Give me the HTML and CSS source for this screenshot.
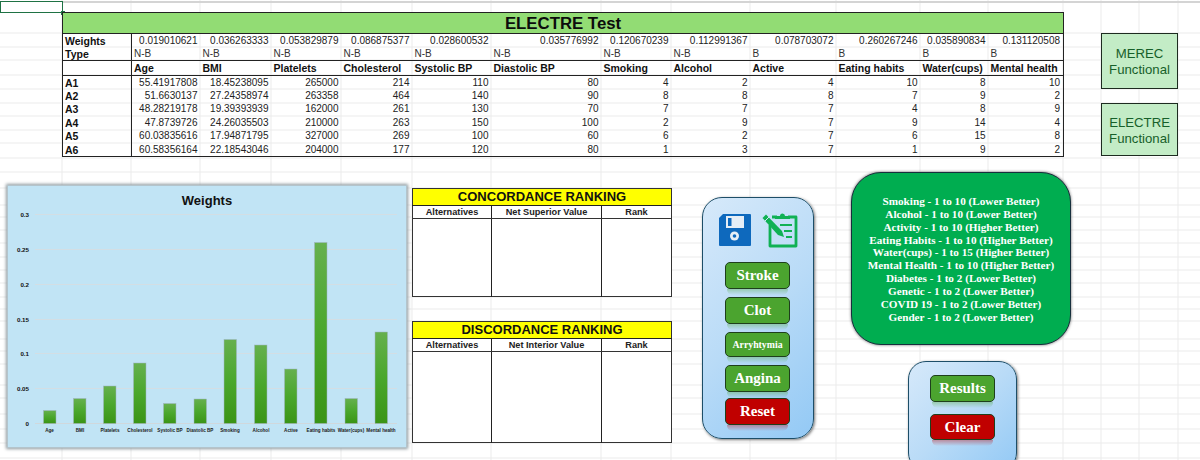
FILE: index.html
```html
<!DOCTYPE html>
<html lang="en">
<head>
<meta charset="utf-8">
<title>ELECTRE Test</title>
<link rel="stylesheet" href="styles.css">
</head>
<body>
<div class="sheet">
  <svg class="gridlines" width="1200" height="460" aria-hidden="true">
    <path class="grid-v" d="M62 0V460M131 0V460M200 0V460M271 0V460M341 0V460M412 0V460M491 0V460M601 0V460M671 0V460M750 0V460M836 0V460M920 0V460M988 0V460M1063 0V460M1101 0V460M1139 0V460M1178 0V460"/>
    <path class="grid-h" d="M0 33H1200M0 47H1200M0 60H1200M0 75H1200M0 89H1200M0 103H1200M0 116H1200M0 130H1200M0 143H1200M0 158H1200M0 172H1200M0 188H1200M0 205H1200M0 217H1200M0 230H1200M0 243H1200M0 257H1200M0 270H1200M0 283H1200M0 297H1200M0 309H1200M0 321H1200M0 339H1200M0 351H1200M0 364H1200M0 385H1200M0 398H1200M0 414H1200M0 429H1200M0 443H1200M0 458H1200"/>
    <path class="grid-top" d="M62 2H1200"/>
  </svg>
  <div class="selected-cell"></div>

  <div class="top-row">
    <table class="data-table">
      <colgroup>
        <col class="c1"><col class="c2"><col class="c3"><col class="c4"><col class="c5"><col class="c6"><col class="c7"><col class="c8"><col class="c9"><col class="c10"><col class="c11"><col class="c12"><col class="c13">
      </colgroup>
      <thead>
        <tr class="title-row"><th colspan="13">ELECTRE Test</th></tr>
      </thead>
      <tbody class="meta">
        <tr>
          <th class="side">Weights</th><td>0.019010621</td><td>0.036263333</td><td>0.053829879</td><td>0.086875377</td><td>0.028600532</td><td>0.035776992</td><td>0.120670239</td><td>0.112991367</td><td>0.078703072</td><td>0.260267246</td><td>0.035890834</td><td>0.131120508</td>
        </tr>
        <tr class="type-row">
          <th class="side">Type</th><td>N-B</td><td>N-B</td><td>N-B</td><td>N-B</td><td>N-B</td><td>N-B</td><td>N-B</td><td>N-B</td><td>B</td><td>B</td><td>B</td><td>B</td>
        </tr>
      </tbody>
      <tbody class="heads">
        <tr>
          <th class="side"></th><th>Age</th><th>BMI</th><th>Platelets</th><th>Cholesterol</th><th>Systolic BP</th><th>Diastolic BP</th><th>Smoking</th><th>Alcohol</th><th>Active</th><th>Eating habits</th><th>Water(cups)</th><th>Mental health</th>
        </tr>
      </tbody>
      <tbody class="values">
        <tr><th class="side">A1</th><td>55.41917808</td><td>18.45238095</td><td>265000</td><td>214</td><td>110</td><td>80</td><td>4</td><td>2</td><td>4</td><td>10</td><td>8</td><td>10</td></tr>
        <tr><th class="side">A2</th><td>51.6630137</td><td>27.24358974</td><td>263358</td><td>464</td><td>140</td><td>90</td><td>8</td><td>8</td><td>8</td><td>7</td><td>9</td><td>2</td></tr>
        <tr><th class="side">A3</th><td>48.28219178</td><td>19.39393939</td><td>162000</td><td>261</td><td>130</td><td>70</td><td>7</td><td>7</td><td>7</td><td>4</td><td>8</td><td>9</td></tr>
        <tr><th class="side">A4</th><td>47.8739726</td><td>24.26035503</td><td>210000</td><td>263</td><td>150</td><td>100</td><td>2</td><td>9</td><td>7</td><td>9</td><td>14</td><td>4</td></tr>
        <tr><th class="side">A5</th><td>60.03835616</td><td>17.94871795</td><td>327000</td><td>269</td><td>100</td><td>60</td><td>6</td><td>2</td><td>7</td><td>6</td><td>15</td><td>8</td></tr>
        <tr><th class="side">A6</th><td>60.58356164</td><td>22.18543046</td><td>204000</td><td>177</td><td>120</td><td>80</td><td>1</td><td>3</td><td>7</td><td>1</td><td>9</td><td>2</td></tr>
      </tbody>
    </table>
    <div class="side-buttons">
      <div class="func-btn">MEREC<br>Functional</div>
      <div class="func-btn func-btn-short">ELECTRE<br>Functional</div>
    </div>
  </div>

  <div class="bottom-row">
    <figure class="chart">
      <svg width="398" height="261" viewBox="8 186 398 261">
        <defs>
          <linearGradient id="barfill" x1="0" y1="0" x2="0" y2="1">
            <stop offset="0" stop-color="#66b04e"/>
            <stop offset="0.5" stop-color="#4aa72c"/>
            <stop offset="1" stop-color="#3a9416"/>
          </linearGradient>
        </defs>
        <text class="chart-title" x="207" y="205">Weights</text>
        <path class="chart-grid" d="M35 214.500H397M35 249.500H397M35 284.500H397M35 319.500H397M35 353.500H397M35 388.500H397"/>
        <path class="chart-axis" d="M35 423.500H397"/>
        <g class="y-labels">
          <text x="29" y="217">0.3</text>
          <text x="29" y="252">0.25</text>
          <text x="29" y="287">0.2</text>
          <text x="29" y="322">0.15</text>
          <text x="29" y="356">0.1</text>
          <text x="29" y="391">0.05</text>
          <text x="29" y="426">0</text>
        </g>
        <g class="bars">
          <rect x="43.500" y="410.500" width="12.500" height="13"/>
          <rect x="73.500" y="398.500" width="12.500" height="25"/>
          <rect x="103.500" y="386" width="12.500" height="37.500"/>
          <rect x="133.500" y="363" width="12.500" height="60.500"/>
          <rect x="163.500" y="403.500" width="12.500" height="20"/>
          <rect x="194" y="399" width="12.500" height="24.500"/>
          <rect x="224" y="339.500" width="12.500" height="84"/>
          <rect x="254.500" y="345" width="12.500" height="78.500"/>
          <rect x="284.500" y="369" width="12.500" height="54.500"/>
          <rect x="314.500" y="242.500" width="12.500" height="181"/>
          <rect x="345" y="398.500" width="12.500" height="25"/>
          <rect x="375" y="332" width="12.500" height="91.500"/>
        </g>
        <g class="x-labels">
          <text x="49.500" y="432">Age</text>
          <text x="80" y="432">BMI</text>
          <text x="110" y="432">Platelets</text>
          <text x="140" y="432">Cholesterol</text>
          <text x="170" y="432">Systolic BP</text>
          <text x="200" y="432">Diastolic BP</text>
          <text x="230" y="432">Smoking</text>
          <text x="261" y="432">Alcohol</text>
          <text x="291" y="432">Active</text>
          <text x="321" y="432">Eating habits</text>
          <text x="351" y="432">Water(cups)</text>
          <text x="381" y="432">Mental health</text>
        </g>
      </svg>
    </figure>

    <div class="rankings">
      <table class="rank-table rank-top">
        <colgroup><col class="r1"><col class="r2"><col class="r3"></colgroup>
        <thead>
          <tr class="rank-title"><th colspan="3">CONCORDANCE RANKING</th></tr>
          <tr class="rank-head"><th>Alternatives</th><th>Net Superior Value</th><th>Rank</th></tr>
        </thead>
        <tbody><tr><td></td><td></td><td></td></tr></tbody>
      </table>
      <table class="rank-table rank-bottom">
        <colgroup><col class="r1"><col class="r2"><col class="r3"></colgroup>
        <thead>
          <tr class="rank-title"><th colspan="3">DISCORDANCE RANKING</th></tr>
          <tr class="rank-head"><th>Alternatives</th><th>Net Interior Value</th><th>Rank</th></tr>
        </thead>
        <tbody><tr><td></td><td></td><td></td></tr></tbody>
      </table>
    </div>

    <div class="panel panel-main">
      <div class="icons">
        <svg width="34" height="34" viewBox="0 0 34 34" aria-label="Save">
          <path class="floppy" d="M5 1H32a1 1 0 0 1 1 1V32a1 1 0 0 1-1 1H2a1 1 0 0 1-1-1V5Z"/>
          <rect class="floppy-label" x="8" y="3" width="18" height="12"/>
          <rect class="floppy-slot" x="10" y="5" width="3.500" height="8"/>
          <circle class="floppy-label" cx="16.500" cy="23" r="4.500"/>
          <circle class="floppy-slot" cx="16.500" cy="23" r="1.800"/>
        </svg>
        <svg width="36" height="36" viewBox="0 0 36 36" aria-label="Clipboard">
          <path class="clip-line" d="M8 13V34H34V5H26M15 5H10"/>
          <path class="clip-fill" d="M13 7V4H18A2.500 2.500 0 0 1 23 4H28V7Z"/>
          <path class="clip-thin" d="M18 13H30M22 19H30M24 25H30"/>
          <path class="clip-fill" d="M0.500 6L4 2.500L20 19L22 25L16 23Z"/>
          <path class="clip-cut" d="M3 9L7 5"/>
        </svg>
      </div>
      <div class="btn btn-green">Stroke</div>
      <div class="btn btn-green">Clot</div>
      <div class="btn btn-green btn-small">Arryhtymia</div>
      <div class="btn btn-green btn-tight">Angina</div>
      <div class="btn btn-red">Reset</div>
    </div>

    <div class="right-col">
      <div class="scale-box">
        <p>Smoking - 1 to 10 (Lower Better)</p>
        <p>Alcohol - 1 to 10 (Lower Better)</p>
        <p>Activity - 1 to 10 (Higher Better)</p>
        <p>Eating Habits - 1 to 10 (Higher Better)</p>
        <p>Water(cups) - 1 to 15 (Higher Better)</p>
        <p>Mental Health - 1 to 10 (Higher Better)</p>
        <p>Diabetes - 1 to 2 (Lower Better)</p>
        <p>Genetic - 1 to 2 (Lower Better)</p>
        <p>COVID 19 - 1 to 2 (Lower Better)</p>
        <p>Gender - 1 to 2 (Lower Better)</p>
      </div>
      <div class="panel panel-small">
        <div class="btn btn-green">Results</div>
        <div class="btn btn-red">Clear</div>
      </div>
    </div>
  </div>
</div>
</body>
</html>
```

FILE: styles.css
```css
* { box-sizing: border-box; }

html, body {
  margin: 0;
  height: 460px;
  overflow: hidden;
  background: #fff;
}

.sheet {
  position: relative;
  width: 1200px;
  height: 460px;
  overflow: hidden;
  font-family: "Liberation Sans", Arial, sans-serif;
  color: #111;
}

.gridlines {
  position: absolute;
  inset: 0;
}
.grid-v, .grid-h { stroke: #ebebeb; stroke-width: 1; fill: none; }
.grid-top { stroke: #d4d4d4; stroke-width: 2; fill: none; }

.selected-cell {
  position: absolute;
  left: 0;
  top: 1px;
  width: 63px;
  height: 12px;
  border: 1px solid #1f7244;
  background: #fff;
}
.selected-cell::after {
  content: "";
  position: absolute;
  right: -3px;
  bottom: -3px;
  width: 4px;
  height: 4px;
  background: #1f7244;
}

.top-row {
  position: relative;
  display: flex;
  align-items: flex-start;
  gap: 37px;
  padding: 12px 0 0 62px;
  height: 172px;
}

/* data table */
.data-table {
  border-collapse: collapse;
  table-layout: fixed;
  width: 1001px;
  border: 1.5px solid #222;
  font-size: 10px;
  line-height: 12px;
}
.data-table td, .data-table th {
  padding: 0 3px 0 2px;
  overflow: visible;
  white-space: nowrap;
}
.c1 { width: 69px; }
.c2 { width: 69px; }
.c3 { width: 71px; }
.c4 { width: 70px; }
.c5 { width: 71px; }
.c6 { width: 79px; }
.c7 { width: 110px; }
.c8 { width: 70px; }
.c9 { width: 79px; }
.c10 { width: 86px; }
.c11 { width: 84px; }
.c12 { width: 68px; }
.c13 { width: 75px; }

.data-table .title-row th {
  height: 21px;
  padding: 2px 0 0;
  background: #92dc74;
  border-bottom: 1.5px solid #222;
  font-size: 16.800px;
  line-height: 18px;
  color: #0c0c0c;
  text-align: center;
}
.meta tr { height: 13.500px; }
.meta td { text-align: right; color: #222; }
.meta .type-row td { text-align: left; color: #333; }
.side {
  text-align: left;
  border-right: 1.5px solid #222;
  font-weight: bold;
  font-size: 10.500px;
}
.heads tr { height: 15px; border-top: 1.5px solid #222; border-bottom: 1.5px solid #222; }
.heads th { text-align: left; font-size: 10.500px; }
.values tr { height: 13.500px; }
.values td { text-align: right; color: #222; }

/* side buttons */
.side-buttons {
  display: flex;
  flex-direction: column;
  gap: 14px;
  padding-top: 21px;
}
.func-btn {
  width: 77px;
  height: 56px;
  padding-top: 12px;
  background: #c3ecc6;
  border: 1.5px solid #1d2b20;
  color: #17602a;
  font-size: 13.200px;
  line-height: 16px;
  text-align: center;
}
.func-btn-short { height: 53px; padding-top: 11px; }

/* bottom */
.bottom-row {
  position: relative;
  display: flex;
  align-items: flex-start;
  padding-left: 7px;
}

.chart {
  margin: 13px 0 0;
  width: 400px;
  height: 263px;
  background: #c1e4f5;
  border: 1px solid #b3c4cc;
  box-shadow: 0 0 3px 1px #8f9a9f;
}
.chart svg { display: block; }
.chart-title {
  font-size: 13px;
  font-weight: bold;
  text-anchor: middle;
  fill: #111;
}
.chart-grid { stroke: #d3dee4; stroke-width: 1; fill: none; }
.chart-axis { stroke: #d0d8dc; stroke-width: 1; fill: none; }
.y-labels text {
  font-size: 6.200px;
  font-weight: bold;
  text-anchor: end;
  fill: #111;
}
.x-labels text {
  font-size: 4.600px;
  font-weight: bold;
  text-anchor: middle;
  fill: #1a1a1a;
}
.bars rect {
  fill: url(#barfill);
  stroke: #9fb3c4;
  stroke-width: 0.500;
}

.rankings {
  display: flex;
  flex-direction: column;
  margin: 16px 0 0 5px;
  width: 259px;
  gap: 24px;
}
.rank-table {
  border-collapse: collapse;
  table-layout: fixed;
  width: 259px;
  background: #fff;
  border: 1.5px solid #333;
}
.rank-top { height: 109px; }
.rank-bottom { height: 122px; }
.r1 { width: 79px; }
.r2 { width: 110px; }
.r3 { width: 70px; }
.rank-title th {
  height: 17px;
  background: #ffff00;
  border-bottom: 1px solid #222;
  font-size: 13px;
  line-height: 16px;
  color: #111;
  padding: 0;
}
.rank-head th {
  height: 12px;
  border-right: 1px solid #222;
  border-bottom: 1.5px solid #333;
  font-size: 9.200px;
  line-height: 11px;
  color: #222;
  padding: 1px 0 0;
}
.rank-table td { border-right: 1px solid #222; padding: 0; }
.rank-table th:last-child, .rank-table td:last-child { border-right: 0; }

/* panels */
.panel {
  border: 1.5px solid #1d4e68;
  background: linear-gradient(135deg, #d6e9fa 0%, #b9dbf7 50%, #93c9f5 100%);
  box-shadow: 1px 1px 3px #777;
  display: flex;
  flex-direction: column;
  align-items: center;
}
.panel-main {
  margin: 25px 0 0 31px;
  width: 112px;
  height: 242px;
  border-radius: 20px;
  padding: 14px 1px 0 0;
}
.icons {
  display: flex;
  align-items: center;
  justify-content: center;
  gap: 10px;
  height: 36px;
  margin-bottom: 14px;
}
.floppy { fill: #0e69bd; }
.floppy-label { fill: #e6eef6; }
.floppy-slot { fill: #0e69bd; }
.clip-line { fill: none; stroke: #10b154; stroke-width: 2.800; stroke-linejoin: round; }
.clip-thin { fill: none; stroke: #10b154; stroke-width: 1.800; }
.clip-fill { fill: #10b154; }
.clip-cut { stroke: #cfe6f8; stroke-width: 1; }

.btn {
  position: relative;
  flex: none;
  width: 65px;
  height: 26.500px;
  margin-bottom: 8.500px;
  border: 1px solid #1e3f1c;
  border-radius: 5px;
  font-family: "Liberation Serif", "Times New Roman", serif;
  font-weight: bold;
  font-size: 15px;
  line-height: 24px;
  text-align: center;
  color: #fff;
}
.btn::after {
  content: "";
  position: absolute;
  left: 1px;
  right: 1px;
  top: 100%;
  height: 6px;
  margin-top: 1px;
  border-radius: 0 0 5px 5px;
  opacity: 0.35;
  background: inherit;
  -webkit-mask-image: linear-gradient(#000, transparent);
  mask-image: linear-gradient(#000, transparent);
}
.btn-green { background: #4ba42f; }
.btn-red { background: #c00000; }
.btn-small { font-size: 9.800px; height: 25px; margin-bottom: 8px; }
.btn-tight { margin-bottom: 6.500px; }

.right-col {
  display: flex;
  flex-direction: column;
  align-items: flex-start;
  margin-left: 37px;
}
.scale-box {
  width: 220px;
  height: 173px;
  padding-top: 22px;
  background: #00ad50;
  border: 1.5px solid #172f3d;
  border-radius: 30px;
  box-shadow: 0 0 3px #666;
  font-family: "Liberation Serif", "Times New Roman", serif;
  font-weight: bold;
  font-size: 11.200px;
  line-height: 12.850px;
  text-align: center;
  color: #fff;
}
.scale-box p { margin: 0; }
.panel-small {
  margin: 16px 0 0 57px;
  width: 109px;
  height: 110px;
  border-radius: 18px;
  padding-top: 13px;
}
.panel-small .btn { margin-bottom: 12px; }
```
